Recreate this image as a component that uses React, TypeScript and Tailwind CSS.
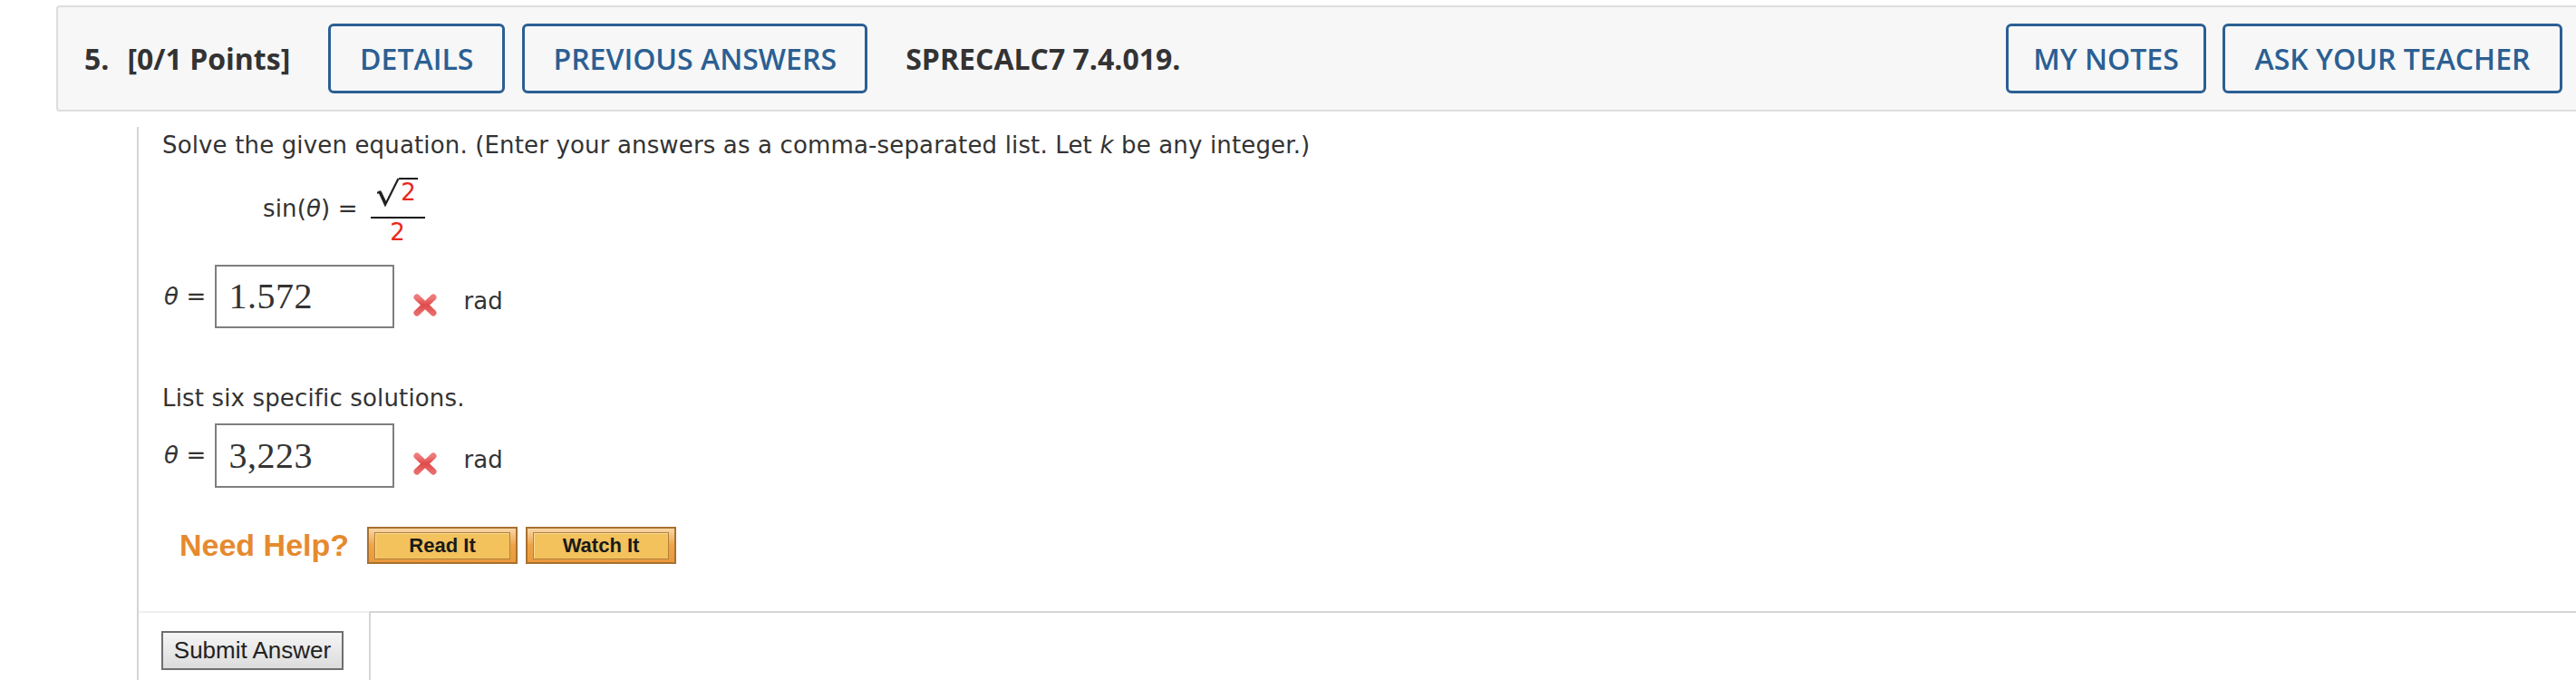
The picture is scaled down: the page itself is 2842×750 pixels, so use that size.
import React from "react";

const headerFont = { fontFamily: '"Open Sans", "Noto Sans", sans-serif' };

function HeaderButton({ label, width }: { label: string; width: string }) {
  return (
    <div
      className={`${width} h-[77px] flex items-center justify-center border-[3px] border-[#2b5f93] rounded-[6px] text-[32px] font-semibold text-[#2b5f93] shrink-0`}
    >
      {label}
    </div>
  );
}

function WrongMark() {
  return (
    <svg width="28" height="27" viewBox="0 0 28 27" className="shrink-0">
      <defs>
        <linearGradient id="xg" x1="0" y1="0" x2="0" y2="1">
          <stop offset="0" stopColor="#ef7a7a" />
          <stop offset="0.5" stopColor="#e04a4a" />
          <stop offset="1" stopColor="#e86a6a" />
        </linearGradient>
      </defs>
      <path
        d="M5 5 L23 22 M23 5 L5 22"
        stroke="url(#xg)"
        strokeWidth="7"
        strokeLinecap="round"
        fill="none"
      />
    </svg>
  );
}

function AnswerRow({ value, h }: { value: string; h: string }) {
  return (
    <div className={`flex items-center ${h}`}>
      <span className="pl-[2px]">
        <i>θ</i> =
      </span>
      <div
        className={`ml-[10px] w-[198px] ${h} shrink-0 border-2 border-[#7f7f7f] flex items-center pl-[13px] text-[40px] tracking-[0.5px] text-[#333]`}
        style={{ fontFamily: '"Liberation Serif", "DejaVu Serif", serif' }}
      >
        {value}
      </div>
      <div className="ml-[20px] mt-[18px]">
        <WrongMark />
      </div>
      <span className="ml-[28px] mt-[10px]">rad</span>
    </div>
  );
}

function HelpButton({ label }: { label: string }) {
  return (
    <div className="w-[166px] h-[41px] border-2 border-[#a8702f] bg-gradient-to-b from-[#f8d7a6] via-[#eea445] to-[#e99a3c] px-[6px] pt-[4px] pb-[3px]">
      <div className="h-full border border-[#b0813f] bg-[#f3c25c] flex items-center justify-center text-[22px] font-bold text-[#1a1a1a] leading-none shadow-[inset_1px_1px_0_#f9dc9a]">
        {label}
      </div>
    </div>
  );
}

export default function App() {
  return (
    <div
      className="w-[2842px] h-[750px] bg-white overflow-hidden text-[#333]"
      style={{ fontFamily: '"DejaVu Sans", Verdana, sans-serif' }}
    >
      {/* Question header */}
      <div className="pt-[6px] pl-[62px]">
        <div
          className="w-[2780px] h-[117px] bg-[#f7f7f7] border-2 border-r-0 border-[#dedede] rounded-l-[4px] flex items-center pl-[29px] pr-[15px]"
          style={headerFont}
        >
          <div className="flex items-center text-[32px] font-bold text-[#333] shrink-0">
            <span>5.</span>
            <span className="ml-[20px]">[0/1 Points]</span>
          </div>
          <div className="ml-[42px] flex items-center gap-[19px]">
            <HeaderButton label="DETAILS" width="w-[195px]" />
            <HeaderButton label="PREVIOUS ANSWERS" width="w-[381px]" />
          </div>
          <div className="ml-[42px] text-[32px] font-bold text-[#333] shrink-0">
            SPRECALC7 7.4.019.
          </div>
          <div className="ml-auto flex items-center gap-[18px]">
            <HeaderButton label="MY NOTES" width="w-[221px]" />
            <HeaderButton label="ASK YOUR TEACHER" width="w-[375px]" />
          </div>
        </div>
      </div>

      {/* Question body */}
      <div className="ml-[151px] border-l-2 border-[#d4d4d4] h-[700px] text-[26px] tracking-[0.15px]">
        <div className="pl-[26px]">
          <div className="mt-[17px] h-[40px] leading-[40px]">
            Solve the given equation. (Enter your answers as a comma-separated list. Let <i>k</i> be any integer.)
          </div>

          <div className="mt-[16px] flex items-start pl-[111px]">
            <span className="mt-[19px] leading-[30px]">
              sin(<i>θ</i>) =
            </span>
            <div className="ml-[14px] w-[60px] flex flex-col items-center">
              <div className="h-[43px] flex items-start">
                <svg width="24" height="32" viewBox="0 0 24 32" className="shrink-0">
                  <path d="M0 17 L3 15.5 L9 30 L23.5 1" stroke="#222" strokeWidth="2.2" fill="none" strokeLinejoin="miter" />
                  <path d="M3 15.5 L9.5 29" stroke="#222" strokeWidth="3.5" fill="none" />
                </svg>
                <div className="border-t-2 border-[#111] w-[21px] flex justify-center">
                  <span className="text-[#e8281e] leading-[30px] mt-[-1px]">2</span>
                </div>
              </div>
              <div className="w-full h-[2px] bg-[#111]" />
              <div className="text-[#e8281e] leading-[30px]">2</div>
            </div>
          </div>

          <div className="mt-[21px]">
            <AnswerRow value="1.572" h="h-[70px]" />
          </div>

          <div className="mt-[57px] h-[40px] leading-[40px]">List six specific solutions.</div>

          <div className="mt-[8px]">
            <AnswerRow value="3,223" h="h-[71px]" />
          </div>

          <div className="mt-[43px] h-[41px] flex items-center pl-[19px] tracking-normal">
            <span
              className="text-[34px] font-bold text-[#e68a2e]"
              style={{ fontFamily: '"Liberation Sans", Arial, sans-serif' }}
            >
              Need Help?
            </span>
            <div
              className="ml-[20px] flex gap-[9px]"
              style={{ fontFamily: '"Liberation Sans", Arial, sans-serif' }}
            >
              <HelpButton label="Read It" />
              <HelpButton label="Watch It" />
            </div>
          </div>
        </div>

        {/* Submit row */}
        <div className="mt-[52px] flex tracking-normal">
          <div className="w-[254px] h-[80px] border-t-2 border-[#efefef] pl-[25px] pt-[20px]">
            <div
              className="w-[201px] h-[43px] border-2 border-[#6e6e6e] bg-gradient-to-b from-[#f5f5f5] to-[#dcdcdc] flex items-center justify-center text-[26px] text-[#222]"
              style={{ fontFamily: '"Liberation Sans", Arial, sans-serif' }}
            >
              Submit Answer
            </div>
          </div>
          <div className="flex-1 h-[80px] border-t-2 border-l-2 border-[#d6d6d6]" />
        </div>
      </div>
    </div>
  );
}
